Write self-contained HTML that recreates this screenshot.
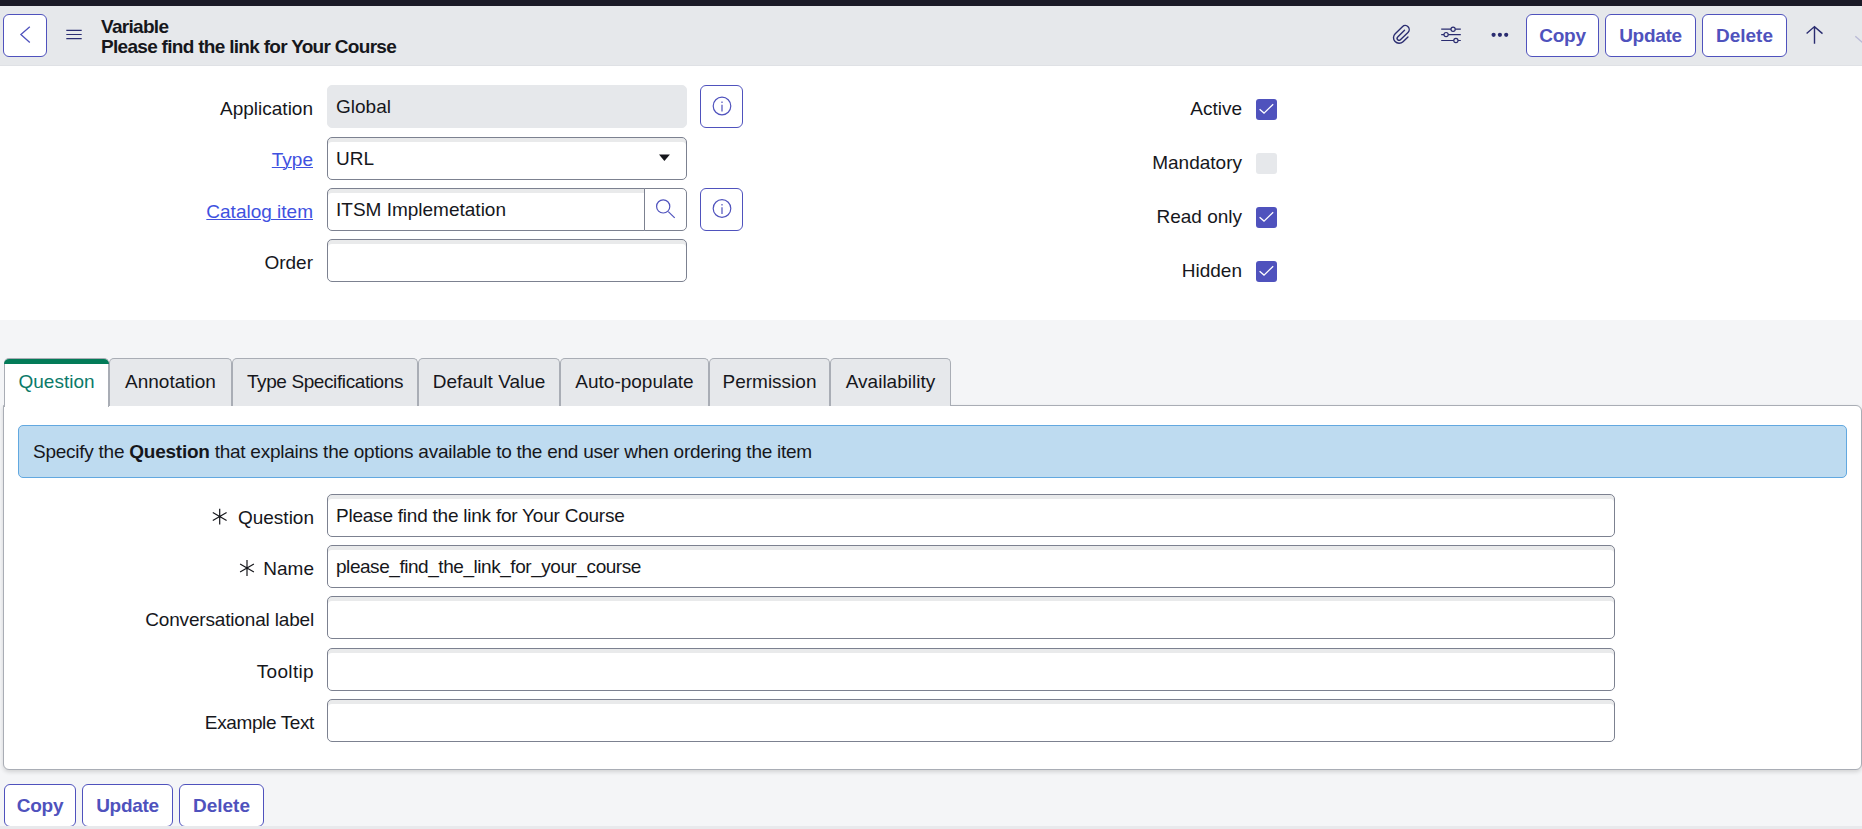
<!DOCTYPE html>
<html><head><meta charset="utf-8">
<style>
*{box-sizing:border-box;margin:0;padding:0}
html,body{width:1862px;height:829px;overflow:hidden;background:#f4f5f7;font-family:"Liberation Sans",sans-serif;color:#16171c}
.abs{position:absolute}
#topbar{left:0;top:0;width:1862px;height:6px;background:#1b1a27}
#hdr{left:0;top:6px;width:1862px;height:60px;background:#e6e8eb;border-bottom:1px solid #dfe1e5}
#body1{left:0;top:66px;width:1862px;height:254px;background:#fff}
.btn{position:absolute;border:1.3px solid #4f52bd;border-radius:6px;background:#fff;color:#4f52bd;font-weight:700;font-size:19px;text-align:center;line-height:20px}
.lbl{position:absolute;font-size:19px;line-height:22px;text-align:right;white-space:nowrap;color:#16171c}
.lnk{color:#4051df;text-decoration:underline;text-underline-offset:1px;text-decoration-thickness:1px}
.inp{position:absolute;border:1.3px solid #7c8190;border-radius:5px;background:#fff;box-shadow:inset 0 4px 0 #e9eaeb;font-size:19px;line-height:22px;white-space:nowrap}
.inp span{position:absolute;left:8px;top:10px}
.ro{background:#e6e8eb;border-color:#e6e8eb;box-shadow:none}
.cb{position:absolute;left:1256px;width:21px;height:21px;border-radius:3px;background:#4f52bd}
.cb svg{position:absolute;left:0;top:0}
.tab{position:absolute;top:358px;height:48px;border:1.3px solid #a9adb5;border-bottom:none;border-radius:5px 5px 0 0;background:#e6e8eb;font-size:19px;line-height:22px;white-space:nowrap;text-align:center;padding-top:12px}
.ico{position:absolute;left:0;top:0;overflow:visible}
</style></head><body>
<div class="abs" id="topbar"></div>
<div class="abs" id="hdr"></div>
<div class="abs" id="body1"></div>

<!-- header -->
<div class="btn" style="left:3px;top:14px;width:44px;height:43px;border-width:1.5px;border-radius:6px"></div>
<svg class="ico" width="1862" height="70">
  <path d="M29.8 26.8 L20.9 34.6 L29.8 42.6" fill="none" stroke="#4f52bd" stroke-width="1.3"/>
  <path d="M66.3 30.3H81.7M66.3 34.5H81.7M66.3 38.6H81.7" stroke="#2b2e73" stroke-width="1.2"/>
  <!-- paperclip -->
  <g transform="translate(1402.1 34.8) rotate(46) scale(1.05)" fill="none" stroke="#2a2c70" stroke-width="1.33" stroke-linecap="round">
    <path d="M5.35 -2.6 L5.35 3.95 A5.35 5.35 0 0 1 -5.35 3.95 L-5.35 -5.6 A3.8 3.8 0 0 1 2.25 -5.6 L2.25 4.4 A1.85 1.85 0 0 1 -1.45 4.4 L-1.45 -4.6"/>
  </g>
  <!-- sliders -->
  <g fill="none" stroke="#2a2c70" stroke-width="1.2">
    <path d="M1441.2 29.2H1451M1455.2 29.2H1460.8M1441.2 34.6H1444M1448.2 34.6H1460.8M1441.2 40.5H1453.8M1458 40.5H1460.8"/>
    <circle cx="1453.1" cy="29.2" r="2.1"/>
    <circle cx="1446.1" cy="34.6" r="2.1"/>
    <circle cx="1455.9" cy="40.5" r="2.1"/>
  </g>
  <g fill="#2a2c70">
    <circle cx="1493.6" cy="34.8" r="2.1"/><circle cx="1499.9" cy="34.8" r="2.1"/><circle cx="1506.2" cy="34.8" r="2.1"/>
  </g>
  <path d="M1806.6 33.6 L1814.5 26.6 L1822.5 33.6 M1814.5 26.8 V43.7" fill="none" stroke="#2a2c70" stroke-width="1.4"/>
  <path d="M1855.3 36.2 L1863 43" fill="none" stroke="#b9bad6" stroke-width="1.3"/>
</svg>
<div class="abs" style="left:101px;top:17px;font-size:19px;font-weight:700;line-height:20px;letter-spacing:-0.7px;color:#16171c;white-space:nowrap">Variable<br>Please find the link for Your Course</div>

<div class="btn" style="left:1526px;top:14px;width:73px;height:43px;padding-top:11px;letter-spacing:-0.3px">Copy</div>
<div class="btn" style="left:1605px;top:14px;width:91px;height:43px;padding-top:11px;letter-spacing:-0.3px">Update</div>
<div class="btn" style="left:1702px;top:14px;width:85px;height:43px;padding-top:11px">Delete</div>

<!-- form -->
<div class="lbl" style="right:1549px;top:98px">Application</div>
<div class="inp ro" style="left:327px;top:85px;width:360px;height:43px"><span>Global</span></div>
<div class="btn" style="left:700px;top:85px;width:43px;height:43px"></div>

<div class="lbl lnk" style="right:1549px;top:149px">Type</div>
<div class="inp" style="left:327px;top:137px;width:360px;height:43px"><span>URL</span></div>

<div class="lbl lnk" style="right:1549px;top:201px">Catalog item</div>
<div class="inp" style="left:327px;top:188px;width:318px;height:43px;border-radius:5px 0 0 5px"><span>ITSM Implemetation</span></div>
<div class="inp" style="left:644px;top:188px;width:43px;height:43px;border-radius:0 5px 5px 0;box-shadow:none"></div>
<div class="btn" style="left:700px;top:188px;width:43px;height:43px"></div>

<div class="lbl" style="right:1549px;top:252px">Order</div>
<div class="inp" style="left:327px;top:239px;width:360px;height:43px"></div>

<svg class="ico" width="1862" height="300">
  <g fill="none" stroke="#4f52bd" stroke-width="1.2">
    <circle cx="722" cy="106" r="8.8"/><path d="M722 104.8V111.5M722 101.4V102.9"/>
    <circle cx="722" cy="208.5" r="8.8"/><path d="M722 207.3V214M722 203.9V205.4"/>
    <circle cx="663.2" cy="206.4" r="6.6"/><path d="M668.3 211.6L674.7 217.9"/>
  </g>
  <path d="M659 154.5H669.9L664.4 161Z" fill="#16171c"/>
</svg>

<div class="lbl" style="right:620px;top:98px">Active</div>
<div class="cb" style="top:99px"><svg width="21" height="21"><path d="M3.6 10.3L8 14.1L17.2 5.2" fill="none" stroke="#fff" stroke-width="1.3"/></svg></div>
<div class="lbl" style="right:620px;top:152px">Mandatory</div>
<div class="cb" style="top:153px;background:#e6e8eb"></div>
<div class="lbl" style="right:620px;top:206px">Read only</div>
<div class="cb" style="top:207px"><svg width="21" height="21"><path d="M3.6 10.3L8 14.1L17.2 5.2" fill="none" stroke="#fff" stroke-width="1.3"/></svg></div>
<div class="lbl" style="right:620px;top:260px">Hidden</div>
<div class="cb" style="top:261px"><svg width="21" height="21"><path d="M3.6 10.3L8 14.1L17.2 5.2" fill="none" stroke="#fff" stroke-width="1.3"/></svg></div>

<!-- tabs -->
<div class="abs" style="left:3px;top:405px;width:1859px;height:365px;background:#fff;border:1.3px solid #a9adb5;border-radius:0 6px 6px 6px;box-shadow:0 2px 4px rgba(0,0,0,0.14)"></div>
<div class="tab" style="left:4px;width:105px;background:#fff;color:#0b7a69;height:49px">Question</div>
<div class="abs" style="left:4px;top:358.8px;width:105px;height:5.2px;background:#037b58;border-radius:5px 5px 0 0"></div>
<div class="tab" style="left:109px;width:123px">Annotation</div>
<div class="tab" style="left:232px;width:186px;letter-spacing:-0.4px">Type Specifications</div>
<div class="tab" style="left:418px;width:142px">Default Value</div>
<div class="tab" style="left:560px;width:149px">Auto-populate</div>
<div class="tab" style="left:709px;width:121px">Permission</div>
<div class="tab" style="left:830px;width:121px">Availability</div>

<div class="abs" style="left:18px;top:425px;width:1829px;height:53px;background:#bedbf0;border:1.3px solid #62a8e0;border-radius:5px;font-size:19px;line-height:22px;padding:15px 0 0 14px;white-space:nowrap;letter-spacing:-0.25px">Specify the <b>Question</b> that explains the options available to the end user when ordering the item</div>

<svg class="ico" width="1862" height="829">
  <g fill="none" stroke="#16171c" stroke-width="1.2">
    <path d="M219.7 508.7V524.6M212.8 512.6L226.6 520.6M212.8 520.6L226.6 512.6"/>
    <path d="M247 560V575.9M240.1 564L253.9 572M240.1 572L253.9 564"/>
  </g>
</svg>
<div class="lbl" style="right:1548px;top:507px">Question</div>
<div class="inp" style="left:327px;top:494px;width:1288px;height:43px"><span style="letter-spacing:-0.23px">Please find the link for Your Course</span></div>
<div class="lbl" style="right:1548px;top:558px">Name</div>
<div class="inp" style="left:327px;top:545px;width:1288px;height:43px"><span style="letter-spacing:-0.45px">please_find_the_link_for_your_course</span></div>
<div class="lbl" style="right:1548px;top:609px;letter-spacing:-0.17px">Conversational label</div>
<div class="inp" style="left:327px;top:596px;width:1288px;height:43px"></div>
<div class="lbl" style="right:1548px;top:661px;letter-spacing:0.35px">Tooltip</div>
<div class="inp" style="left:327px;top:648px;width:1288px;height:43px"></div>
<div class="lbl" style="right:1548px;top:712px;letter-spacing:-0.38px">Example Text</div>
<div class="inp" style="left:327px;top:699px;width:1288px;height:43px"></div>

<div class="btn" style="left:4px;top:784px;width:72px;height:43px;padding-top:11px;letter-spacing:-0.3px">Copy</div>
<div class="btn" style="left:82px;top:784px;width:91px;height:43px;padding-top:11px;letter-spacing:-0.3px">Update</div>
<div class="btn" style="left:179px;top:784px;width:85px;height:43px;padding-top:11px">Delete</div>
<div class="abs" style="left:0;top:826px;width:1862px;height:3px;background:#e8e9ec"></div>
</body></html>
